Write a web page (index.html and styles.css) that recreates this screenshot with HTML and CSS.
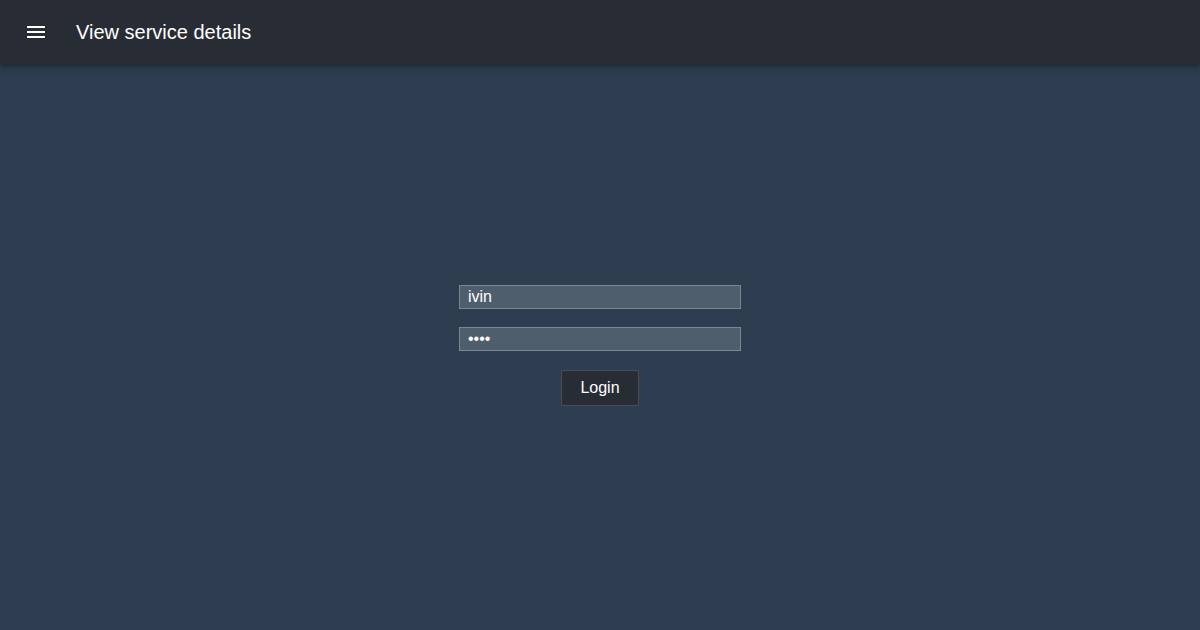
FILE: index.html
```html
<!DOCTYPE html>
<html>
<head>
<meta charset="utf-8">
<link rel="stylesheet" href="styles.css">
</head>
<body>
<header class="appbar">
  <button class="menu-btn" aria-label="menu">
    <svg width="24" height="24" viewBox="0 0 24 24"><path d="M3 18h18v-2H3v2zm0-5h18v-2H3v2zm0-7v2h18V6H3z" fill="#fff"/></svg>
  </button>
  <h1 class="title">View service details</h1>
</header>
<main class="main">
  <form class="login">
    <input class="field" type="text" value="ivin">
    <input class="field" type="password" value="abcd">
    <button class="login-btn" type="button">Login</button>
  </form>
</main>
</body>
</html>
```

FILE: styles.css
```css
html, body {
  margin: 0;
  height: 100%;
}
body {
  background: #2e3d50;
  font-family: "Liberation Sans", Arial, sans-serif;
  display: flex;
  flex-direction: column;
  color: #fff;
}
.appbar {
  height: 64px;
  flex: 0 0 64px;
  background: #282c34;
  display: flex;
  align-items: center;
  padding: 0 24px;
  box-sizing: border-box;
  box-shadow: 0 2px 4px -1px rgba(0,0,0,0.2), 0 4px 5px 0 rgba(0,0,0,0.14), 0 1px 10px 0 rgba(0,0,0,0.12);
  position: relative;
  z-index: 1;
}
.menu-btn {
  background: none;
  border: 0;
  padding: 0;
  margin: 0 28px 0 0;
  width: 24px;
  height: 24px;
  display: flex;
}
.title {
  margin: 0;
  font-family: "Liberation Sans", Arial, sans-serif;
  font-size: 20px;
  font-weight: 400;
  color: #fff;
}
.main {
  flex: 1;
  display: flex;
  align-items: center;
  justify-content: center;
  padding-bottom: 4px;
}
.login {
  display: flex;
  flex-direction: column;
  align-items: center;
  gap: 18px;
}
.field {
  width: 282px;
  height: 24px;
  box-sizing: border-box;
  background: #4f5e6d;
  border: 1px solid #7b8795;
  color: #fff;
  font-family: "Liberation Sans", Arial, sans-serif;
  font-size: 16px;
  padding: 0 8px;
  outline: none;
}
.login-btn {
  width: 78px;
  height: 36px;
  margin-top: 1px;
  background: #282c34;
  border: 1px solid #4a4f57;
  border-radius: 3px;
  color: #fff;
  font-family: "Liberation Sans", Arial, sans-serif;
  font-size: 16px;
}
```
